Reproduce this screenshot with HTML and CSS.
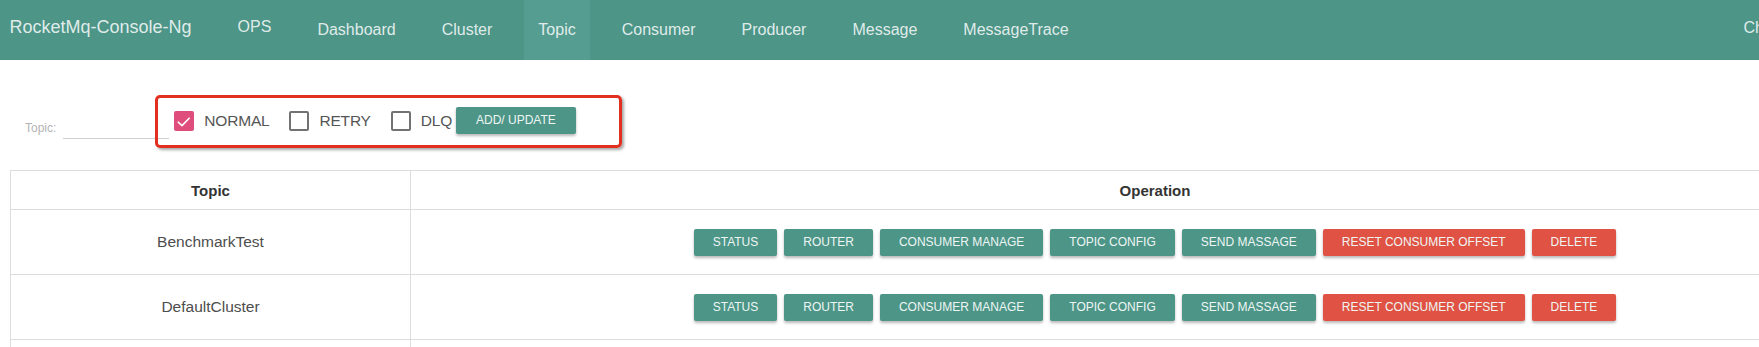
FILE: index.html
```html
<!DOCTYPE html>
<html lang="en">
<head>
<meta charset="utf-8">
<title>RocketMq-Console-Ng</title>
<link rel="stylesheet" href="styles.css">
</head>
<body>
<div class="page">
  <header class="navbar">
    <span class="brand">RocketMq-Console-Ng</span>
    <nav class="menu">
      <a class="item item-ops">OPS</a>
      <a class="item">Dashboard</a>
      <a class="item">Cluster</a>
      <a class="item active">Topic</a>
      <a class="item">Consumer</a>
      <a class="item">Producer</a>
      <a class="item">Message</a>
      <a class="item">MessageTrace</a>
    </nav>
    <a class="lang">Change Language <span class="caret"></span></a>
  </header>

  <main class="content">
    <div class="filter">
      <label class="topic-field">
        <span class="topic-label">Topic:</span>
        <input class="topic-input" type="text">
      </label>
      <div class="types">
        <span class="check">
          <span class="box checked">
            <svg viewBox="0 0 20 20" width="20" height="20"><path d="M4.2 11.2 L8 14.6 L15.2 7.2" fill="none" stroke="#fff" stroke-width="1.6" stroke-linecap="round" stroke-linejoin="round"/></svg>
          </span>
          <span class="check-text">NORMAL</span>
        </span>
        <span class="check">
          <span class="box"></span>
          <span class="check-text">RETRY</span>
        </span>
        <span class="check">
          <span class="box"></span>
          <span class="check-text">DLQ</span>
        </span>
        <button class="btn btn-add">ADD/ UPDATE</button>
      </div>
    </div>

    <table class="topics">
      <colgroup>
        <col class="col-topic">
        <col>
      </colgroup>
      <thead>
        <tr>
          <th>Topic</th>
          <th>Operation</th>
        </tr>
      </thead>
      <tbody>
        <tr>
          <td class="name">BenchmarkTest</td>
          <td>
            <div class="ops">
              <button class="btn">STATUS</button>
              <button class="btn">ROUTER</button>
              <button class="btn">CONSUMER MANAGE</button>
              <button class="btn">TOPIC CONFIG</button>
              <button class="btn">SEND MASSAGE</button>
              <button class="btn btn-danger">RESET CONSUMER OFFSET</button>
              <button class="btn btn-danger">DELETE</button>
            </div>
          </td>
        </tr>
        <tr>
          <td class="name">DefaultCluster</td>
          <td>
            <div class="ops">
              <button class="btn">STATUS</button>
              <button class="btn">ROUTER</button>
              <button class="btn">CONSUMER MANAGE</button>
              <button class="btn">TOPIC CONFIG</button>
              <button class="btn">SEND MASSAGE</button>
              <button class="btn btn-danger">RESET CONSUMER OFFSET</button>
              <button class="btn btn-danger">DELETE</button>
            </div>
          </td>
        </tr>
        <tr>
          <td class="name">&nbsp;</td>
          <td>&nbsp;</td>
        </tr>
      </tbody>
    </table>
  </main>
</div>
</body>
</html>
```

FILE: styles.css
```css
html, body {
  margin: 0;
  padding: 0;
  overflow: hidden;
  background: #fff;
}

body {
  font-family: "Liberation Sans", Arial, Helvetica, sans-serif;
  color: #333;
}

.page {
  width: 1910px;
}

/* ---------- navbar ---------- */
.navbar {
  display: flex;
  align-items: stretch;
  height: 60px;
  background: #4c9587;
  color: rgba(255, 255, 255, 0.84);
}

.brand {
  margin: 0 32px 0 9.5px;
  font-size: 18px;
  line-height: 54px;
  white-space: nowrap;
}

.menu {
  display: flex;
  gap: 18px;
}

.item {
  padding: 0 14px;
  font-size: 16px;
  line-height: 60px;
  white-space: nowrap;
  color: inherit;
}

.item-ops {
  line-height: 54px;
}

.item.active {
  background: #559d90;
}

.lang {
  margin-left: auto;
  margin-right: 3.5px;
  padding: 0 15px;
  font-size: 16px;
  line-height: 56px;
  white-space: nowrap;
  color: inherit;
}

.caret {
  display: inline-block;
  margin-left: 4px;
  vertical-align: middle;
  border-top: 4px solid;
  border-left: 4px solid transparent;
  border-right: 4px solid transparent;
}

/* ---------- content ---------- */
.content {
  padding: 35px 10px 0;
}

.filter {
  display: flex;
  align-items: flex-start;
}

.topic-field {
  display: flex;
  align-items: flex-end;
  margin: 24px 0 0 15px;
  height: 20px;
}

.topic-label {
  font-size: 12px;
  line-height: 13px;
  padding-bottom: 4px;
  color: #b4b4b4;
  margin-right: 7px;
}

.topic-input {
  width: 106px;
  height: 20px;
  box-sizing: border-box;
  padding: 0;
  border: none;
  border-bottom: 1px solid #cfcfcf;
  outline: none;
  background: transparent;
}

.types {
  display: flex;
  align-items: center;
  box-sizing: border-box;
  height: 53px;
  margin-left: -14px;
  padding: 0 0 2px 16px;
  width: 467px;
  border: 3px solid #e1301f;
  border-radius: 5px;
  box-shadow: 2px 2px 3px rgba(0, 0, 0, 0.35);
}

.check {
  display: flex;
  align-items: center;
  margin-right: 20px;
}

.check:nth-child(3) {
  margin-right: 4px;
}

.box {
  width: 20px;
  height: 20px;
  box-sizing: border-box;
  border: 2px solid #727272;
  border-radius: 2px;
  margin-right: 10px;
}

.box.checked {
  border: none;
  background: #df4d7d;
}

.box svg {
  display: block;
}

.check-text {
  font-size: 15.5px;
  letter-spacing: -0.2px;
  line-height: 20px;
  color: #555;
}

.btn {
  height: 27px;
  padding: 0 19px;
  border: none;
  border-radius: 2px;
  background: #4c9587;
  color: #eef6f4;
  font-family: "Liberation Sans", Arial, Helvetica, sans-serif;
  font-size: 12px;
  line-height: 27px;
  white-space: nowrap;
  box-shadow: 0 2px 3px rgba(0, 0, 0, 0.28);
}

.btn-add {
  padding: 0 20px;
}

.btn-danger {
  background: #e05243;
}

/* ---------- table ---------- */
.topics {
  width: 100%;
  margin-top: 22px;
  border-collapse: collapse;
}

.col-topic {
  width: 400px;
}

.topics th,
.topics td {
  border: 1px solid #dddddd;
  padding: 0;
  text-align: center;
  vertical-align: middle;
}

.topics th {
  height: 38px;
  font-size: 15px;
  font-weight: bold;
  color: #333;
}

.topics td {
  height: 64px;
  font-size: 15.5px;
  color: #4d4d4d;
}

.ops {
  display: inline-flex;
  gap: 7px;
  vertical-align: middle;
}
```
